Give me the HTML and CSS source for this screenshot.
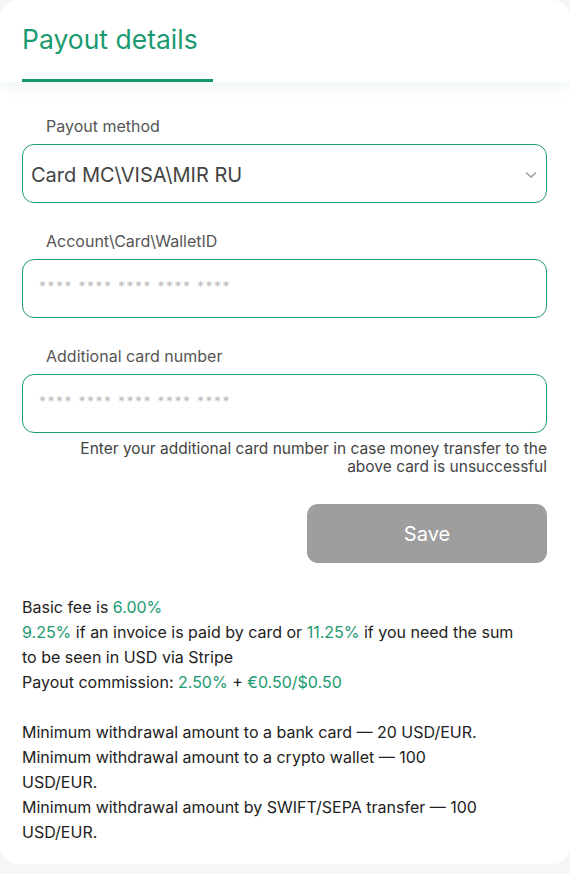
FILE: index.html
```html
<!DOCTYPE html>
<html>
<head>
<meta charset="utf-8">
<link rel="stylesheet" href="styles.css">
</head>
<body>
<div class="card">
  <div class="header">
    <div class="tab">
      <div class="tab-title">Payout details</div>
      <div class="tab-line"></div>
    </div>
  </div>
  <div class="body">
    <div class="field">
      <div class="label">Payout method</div>
      <div class="box select">
        <span class="select-text">Card MC\VISA\MIR RU</span>
        <svg class="chev" width="12" height="8" viewBox="0 0 12 8"><path d="M1 1.5 L6 6 L11 1.5" fill="none" stroke="#999" stroke-width="1.4"/></svg>
      </div>
    </div>
    <div class="field">
      <div class="label">Account\Card\WalletID</div>
      <div class="box input"><span class="ph">**** **** **** **** ****</span></div>
    </div>
    <div class="field">
      <div class="label">Additional card number</div>
      <div class="box input"><span class="ph">**** **** **** **** ****</span></div>
      <div class="hint">Enter your additional card number in case money transfer to the<br>above card is unsuccessful</div>
    </div>
    <div class="actions">
      <button class="save">Save</button>
    </div>
    <div class="info">
      <p>Basic fee is <span class="g">6.00%</span><br>
      <span class="g">9.25%</span> if an invoice is paid by card or <span class="g">11.25%</span> if you need the sum<br>to be seen in USD via Stripe<br>
      Payout commission: <span class="g">2.50%</span> + <span class="g">€0.50/$0.50</span></p>
      <p>Minimum withdrawal amount to a bank card — 20 USD/EUR.<br>
      Minimum withdrawal amount to a crypto wallet — 100<br>USD/EUR.<br>
      Minimum withdrawal amount by SWIFT/SEPA transfer — 100<br>USD/EUR.</p>
    </div>
  </div>
</div>
</body>
</html>
```
FILE: styles.css
```css
html, body {
  margin: 0;
  padding: 0;
  background: #f6f6f6;
}
body {
  font-family: Inter, "Liberation Sans", sans-serif;
  color: #222;
}
.card {
  background: #fff;
  border-radius: 18px;
  height: 864px;
  overflow: hidden;
}
.header {
  height: 82px;
  box-shadow: 0 6px 12px rgba(30, 150, 110, 0.07);
  position: relative;
}
.tab {
  padding-left: 22px;
  width: 191px;
}
.tab-title {
  padding-top: 24px;
  height: 79px;
  box-sizing: border-box;
  font-size: 26.5px;
  line-height: 30px;
  color: #1b9a70;
  white-space: nowrap;
}
.tab-line {
  height: 3px;
  background: #17976c;
}
.body {
  padding: 34px 23px 0 22px;
}
.field {
  margin-bottom: 28px;
}
.label {
  margin-left: 24px;
  font-size: 16px;
  line-height: 20px;
  color: #555;
  margin-bottom: 8px;
}
.box {
  height: 59px;
  border: 1px solid #1a9a70;
  border-radius: 12px;
  box-sizing: border-box;
  display: flex;
  align-items: center;
}
.select {
  justify-content: space-between;
  padding: 2px 9px 0 8px;
}
.select-text {
  font-size: 20px;
  color: #444;
}
.chev {
  display: block;
}
.input {
  align-items: flex-start;
  padding: 18px 16px 0;
}
.ph {
  font-size: 14px;
  color: #bbb;
  letter-spacing: 1.5px;
}
.hint {
  text-align: right;
  font-size: 15.5px;
  line-height: 18px;
  color: #444;
  margin-top: 7px;
}
.actions {
  display: flex;
  justify-content: flex-end;
  margin-top: 0;
}
.save {
  width: 240px;
  height: 59px;
  border: none;
  border-radius: 11px;
  background: #9e9e9e;
  color: #fff;
  font-family: inherit;
  font-size: 20px;
}
.info {
  margin-top: 32px;
  font-size: 16px;
  line-height: 25px;
  color: #222;
}
.info p {
  margin: 0 0 25px;
}
.g {
  color: #1b9a70;
}
```
